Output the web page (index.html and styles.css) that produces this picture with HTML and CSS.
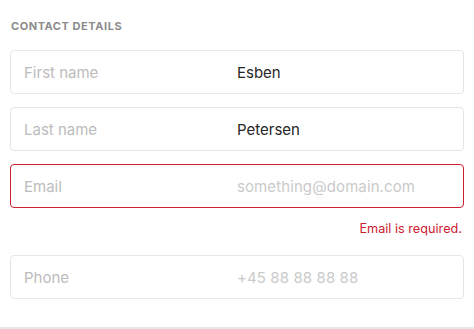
FILE: index.html
```html
<!DOCTYPE html>
<html>
<head>
<meta charset="utf-8">
<link rel="stylesheet" href="styles.css">
</head>
<body>
<div class="page">
  <h2 class="section-title">CONTACT DETAILS</h2>
  <div class="fields">
    <label class="field">
      <span class="field-label">First name</span>
      <span class="field-value">Esben</span>
    </label>
    <label class="field">
      <span class="field-label">Last name</span>
      <span class="field-value">Petersen</span>
    </label>
    <div class="field-group">
      <label class="field field-error">
        <span class="field-label">Email</span>
        <span class="field-value placeholder">something@domain.com</span>
      </label>
      <div class="error-msg">Email is required.</div>
    </div>
    <label class="field">
      <span class="field-label">Phone</span>
      <span class="field-value placeholder">+45 88 88 88 88</span>
    </label>
  </div>
</div>
<div class="footer-bar"></div>
</body>
</html>
```
FILE: styles.css
```css
html, body {
  margin: 0;
  padding: 0;
  background: #ffffff;
}
body {
  font-family: Inter, "Helvetica Neue", Arial, sans-serif;
  width: 474px;
  height: 329px;
  display: flex;
  flex-direction: column;
  overflow: hidden;
}
.page {
  flex: 1;
  padding: 19px 10px 0 10px;
}
.section-title {
  margin: 0 0 17px 1px;
  font-size: 11px;
  line-height: 14px;
  font-weight: 700;
  letter-spacing: 0.55px;
  color: #8c8c8c;
}
.fields {
  display: flex;
  flex-direction: column;
  gap: 13px;
}
.field {
  display: flex;
  align-items: center;
  height: 44px;
  box-sizing: border-box;
  border: 1px solid #e6e6e6;
  border-radius: 4px;
  padding: 0 13px;
  font-size: 15px;
}
.field-label {
  flex: 1;
  color: #bcbcbc;
}
.field-value {
  flex: 1;
  color: #262626;
}
.field-value.placeholder {
  color: #cacaca;
  letter-spacing: 0.1px;
}
.field-error {
  border-color: #cc2030;
}
.error-msg {
  text-align: right;
  font-size: 12.7px;
  color: #cc2030;
  padding: 13px 2px 18px 0;
  line-height: 16px;
}
.field-group {
  display: flex;
  flex-direction: column;
  margin-bottom: -13px;
}
.footer-bar {
  height: 2px;
  background: #e8e8e8;
}
```
